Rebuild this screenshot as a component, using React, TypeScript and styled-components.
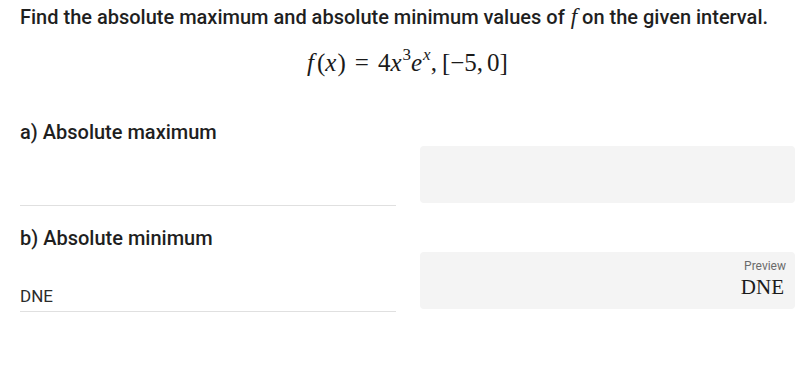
import styled, { createGlobalStyle } from "styled-components";

const GlobalStyle = createGlobalStyle`
  html, body {
    margin: 0;
    padding: 0;
    background: #ffffff;
  }
  body {
    font-family: Roboto, "Liberation Sans", sans-serif;
    color: #212121;
  }
`;

const Page = styled.div`
  width: 806px;
  box-sizing: border-box;
  padding: 5px 11px 0 20px;
`;

const Title = styled.h1`
  margin: 0;
  font-size: 20px;
  line-height: 24px;
  font-weight: 500;
  color: #1f1f1f;
  white-space: nowrap;
`;

const InlineVar = styled.span`
  font-family: "Liberation Serif", "DejaVu Serif", serif;
  font-style: italic;
  font-weight: 400;
  font-size: 23px;
  margin: 0 0 0 1px;
`;

const Formula = styled.div`
  margin: 17px 0 0;
  height: 34px;
  text-align: center;
  font-family: "Liberation Serif", "DejaVu Serif", serif;
  font-size: 25px;
  line-height: 34px;
  color: #1a1a1a;
  white-space: nowrap;
`;

const V = styled.i<{ $after?: number }>`
  font-style: italic;
  margin-right: ${(p) => p.$after ?? 0}px;
`;

const Sup = styled.sup<{ $before?: number }>`
  font-size: 17px;
  line-height: 0;
  vertical-align: 11px;
  margin-left: ${(p) => p.$before ?? 0}px;
`;

const Rel = styled.span`
  margin: 0 9px;
`;

const Gap = styled.span<{ $w: number }>`
  display: inline-block;
  width: ${(p) => p.$w}px;
`;

const Part = styled.section<{ $gap: number }>`
  margin-top: ${(p) => p.$gap}px;
`;

const Label = styled.div`
  font-size: 20px;
  line-height: 24px;
  font-weight: 500;
  color: #1f1f1f;
  margin-bottom: 2px;
`;

const Row = styled.div`
  display: grid;
  grid-template-columns: 1fr 1fr;
  column-gap: 24px;
  height: 60px;
`;

const Answer = styled.div`
  display: flex;
  flex-direction: column;
  justify-content: flex-end;
  border-bottom: 1px solid #e0e0e0;
  padding-bottom: 5px;
  box-sizing: border-box;
  font-size: 17px;
  line-height: 20px;
  color: #2b2b2b;
`;

const PreviewBox = styled.div`
  height: 57px;
  box-sizing: border-box;
  background: #f4f4f4;
  border-radius: 4px;
  padding: 7px 9px 0 0;
  display: flex;
  flex-direction: column;
  align-items: flex-end;
`;

const PreviewCaption = styled.div`
  font-size: 12px;
  line-height: 14px;
  color: #6b6b6b;
`;

const PreviewMath = styled.div`
  font-family: "Liberation Serif", "DejaVu Serif", serif;
  font-size: 21px;
  line-height: 24px;
  color: #1a1a1a;
  margin-top: 2px;
  padding-right: 2px;
`;

type PartData = { label: string; answer: string; gap: number };

const parts: PartData[] = [
  { label: "a) Absolute maximum", answer: "", gap: 40 },
  { label: "b) Absolute minimum", answer: "DNE", gap: 20 },
];

export default function App() {
  return (
    <>
      <GlobalStyle />
      <Page>
        <Title>
          Find the absolute maximum and absolute minimum values of <InlineVar>f</InlineVar> on the
          given interval.
        </Title>
        <Formula>
          <V $after={3}>f</V>(<V $after={1}>x</V>)<Rel>=</Rel>4<V>x</V>
          <Sup $before={1}>3</Sup>
          <V>e</V>
          <Sup $before={1}>
            <V>x</V>
          </Sup>
          ,<Gap $w={5} />[−5,<Gap $w={4} />0]
        </Formula>
        {parts.map((p) => (
          <Part key={p.label} $gap={p.gap}>
            <Label>{p.label}</Label>
            <Row>
              <Answer>{p.answer}</Answer>
              <PreviewBox>
                {p.answer && (
                  <>
                    <PreviewCaption>Preview</PreviewCaption>
                    <PreviewMath>{p.answer}</PreviewMath>
                  </>
                )}
              </PreviewBox>
            </Row>
          </Part>
        ))}
      </Page>
    </>
  );
}
